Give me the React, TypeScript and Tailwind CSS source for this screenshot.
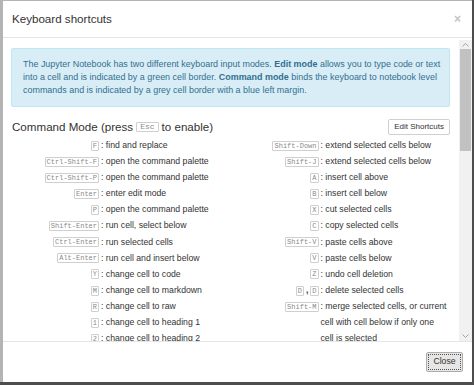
import React from "react";

const Key = ({ k }: { k: string }) => (
    <kbd className="inline-block border border-[#cfcfcf] rounded-[1px] px-[1px] h-[10px] leading-[8px] align-middle text-[7px] text-[#8a8a8a] font-['Liberation_Mono','DejaVu_Sans_Mono',monospace] bg-white">
        {k}
    </kbd>
);

type Row = { keys: string[]; descr: string[] };

const left: Row[] = [
    { keys: ["F"], descr: ["find and replace"] },
    { keys: ["Ctrl-Shift-F"], descr: ["open the command palette"] },
    { keys: ["Ctrl-Shift-P"], descr: ["open the command palette"] },
    { keys: ["Enter"], descr: ["enter edit mode"] },
    { keys: ["P"], descr: ["open the command palette"] },
    { keys: ["Shift-Enter"], descr: ["run cell, select below"] },
    { keys: ["Ctrl-Enter"], descr: ["run selected cells"] },
    { keys: ["Alt-Enter"], descr: ["run cell and insert below"] },
    { keys: ["Y"], descr: ["change cell to code"] },
    { keys: ["M"], descr: ["change cell to markdown"] },
    { keys: ["R"], descr: ["change cell to raw"] },
    { keys: ["1"], descr: ["change cell to heading 1"] },
    { keys: ["2"], descr: ["change cell to heading 2"] },
];

const right: Row[] = [
    { keys: ["Shift-Down"], descr: ["extend selected cells below"] },
    { keys: ["Shift-J"], descr: ["extend selected cells below"] },
    { keys: ["A"], descr: ["insert cell above"] },
    { keys: ["B"], descr: ["insert cell below"] },
    { keys: ["X"], descr: ["cut selected cells"] },
    { keys: ["C"], descr: ["copy selected cells"] },
    { keys: ["Shift-V"], descr: ["paste cells above"] },
    { keys: ["V"], descr: ["paste cells below"] },
    { keys: ["Z"], descr: ["undo cell deletion"] },
    { keys: ["D", "D"], descr: ["delete selected cells"] },
    { keys: ["Shift-M"], descr: ["merge selected cells, or current", "cell with cell below if only one", "cell is selected"] },
];

function ShortcutRow({ row }: { row: Row }) {
    return (
        <div className="flex items-start leading-[16.1px]">
            <span className="w-[88px] shrink-0 text-right whitespace-nowrap">
                {row.keys.map((k, i) => (
                    <React.Fragment key={i}>
                        {i > 0 && <span className="mx-[2px] font-bold">,</span>}
                        <Key k={k} />
                    </React.Fragment>
                ))}
            </span>
            <span className="flex flex-col pl-[2px]">
                {row.descr.map((d, i) => (
                    <span key={i} className="whitespace-nowrap">{i === 0 ? ": " : ""}{d}</span>
                ))}
            </span>
        </div>
    );
}

export default function App() {
    return (
        <div className="w-[474px] h-[385px] bg-[#b4b4b4] pl-[3px] pt-[1px] border-r-[2px] border-b-[3px] border-[#4d4d4d] flex font-['Liberation_Sans',Arial,sans-serif] text-[#333]">
            <div className="flex-1 bg-white flex flex-col overflow-hidden">
                <div className="h-[37px] shrink-0 flex items-center justify-between pl-[9px] pr-[11px] border-b border-[#e5e5e5]">
                    <span className="text-[11.6px]">Keyboard shortcuts</span>
                    <span className="text-[12px] font-bold text-[#c4c4c4] leading-none">×</span>
                </div>
                <div className="h-[303px] shrink-0 flex overflow-hidden">
                    <div className="flex-1 pl-[8px] pr-[9px] pt-[10px] text-[8.7px] overflow-hidden">
                        <div className="bg-[#d9edf7] border border-[#bce8f1] rounded-[2px] text-[#31708f] h-[59px] pl-[11px] pr-[4px] pt-[9px] leading-[13px] text-[8.95px] whitespace-nowrap overflow-hidden">
                            The Jupyter Notebook has two different keyboard input modes. <b>Edit mode</b> allows you to type code or text<br />
                            into a cell and is indicated by a green cell border. <b>Command mode</b> binds the keyboard to notebook level<br />
                            commands and is indicated by a grey cell border with a blue left margin.
                        </div>
                        <div className="mt-[12px] h-[16px] flex items-center justify-between">
                            <span className="text-[11.6px] pl-[1px] flex items-center">
                                Command Mode (press
                                <kbd className="mx-[3px] inline-block border border-[#cfcfcf] rounded-[1px] px-[3px] h-[10px] leading-[8px] text-[8px] text-[#8a8a8a] font-['Liberation_Mono','DejaVu_Sans_Mono',monospace]">Esc</kbd>
                                to enable)
                            </span>
                            <span className="h-[16px] px-[5px] flex items-center border border-[#d0d0d0] rounded-[2px] bg-white text-[8px]">Edit Shortcuts</span>
                        </div>
                        <div className="mt-[2px] grid grid-cols-2">
                            <div className="flex flex-col">
                                {left.map((r, i) => <ShortcutRow key={i} row={r} />)}
                            </div>
                            <div className="flex flex-col">
                                {right.map((r, i) => <ShortcutRow key={i} row={r} />)}
                            </div>
                        </div>
                    </div>
                    <div className="w-[13px] shrink-0 flex flex-col bg-[#f1f1f1] mt-[2px]">
                        <div className="h-[9px] flex items-center justify-center">
                            <svg width="7" height="4" viewBox="0 0 7 4"><path d="M0.5 3.5 L3.5 0.5 L6.5 3.5" fill="none" stroke="#a3a3a3" strokeWidth="1" /></svg>
                        </div>
                        <div className="h-[102px] mx-[1px] bg-[#c1c1c1]" />
                        <div className="flex-1" />
                        <div className="h-[10px] flex items-center justify-center">
                            <svg width="7" height="4" viewBox="0 0 7 4"><path d="M0.5 0.5 L3.5 3.5 L6.5 0.5" fill="none" stroke="#a3a3a3" strokeWidth="1" /></svg>
                        </div>
                    </div>
                </div>
                <div className="flex-1 border-t border-[#e5e5e5] flex items-center justify-end pr-[9px]">
                    <span className="w-[37px] h-[20px] flex items-center justify-center bg-[#e6e6e6] border border-[#adadad] outline-1 outline-dotted outline-[#555] -outline-offset-[3px] rounded-[2px] text-[8.7px]">Close</span>
                </div>
            </div>
        </div>
    );
}
